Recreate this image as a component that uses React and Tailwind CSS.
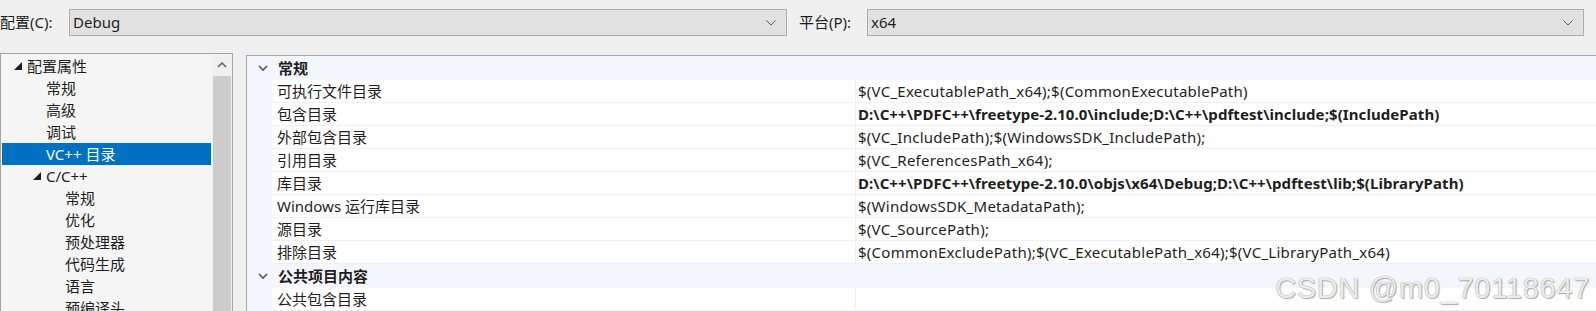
import React from "react";

const FONT = {
  fontFamily:
    '"Noto Sans", "Noto Sans CJK SC", sans-serif',
};

const treeItems = [
  { label: "配置属性", level: 0, expander: true },
  { label: "常规", level: 1 },
  { label: "高级", level: 1 },
  { label: "调试", level: 1 },
  { label: "VC++ 目录", level: 1, selected: true },
  { label: "C/C++", level: 1, expander: true },
  { label: "常规", level: 2 },
  { label: "优化", level: 2 },
  { label: "预处理器", level: 2 },
  { label: "代码生成", level: 2 },
  { label: "语言", level: 2 },
  { label: "预编译头", level: 2 },
];

const sections = [
  {
    title: "常规",
    rows: [
      ["可执行文件目录", "$(VC_ExecutablePath_x64);$(CommonExecutablePath)"],
      [
        "包含目录",
        "D:\\C++\\PDFC++\\freetype-2.10.0\\include;D:\\C++\\pdftest\\include;$(IncludePath)",
        true,
      ],
      ["外部包含目录", "$(VC_IncludePath);$(WindowsSDK_IncludePath);"],
      ["引用目录", "$(VC_ReferencesPath_x64);"],
      [
        "库目录",
        "D:\\C++\\PDFC++\\freetype-2.10.0\\objs\\x64\\Debug;D:\\C++\\pdftest\\lib;$(LibraryPath)",
        true,
      ],
      ["Windows 运行库目录", "$(WindowsSDK_MetadataPath);"],
      ["源目录", "$(VC_SourcePath);"],
      [
        "排除目录",
        "$(CommonExcludePath);$(VC_ExecutablePath_x64);$(VC_LibraryPath_x64)",
      ],
    ],
  },
  {
    title: "公共项目内容",
    rows: [["公共包含目录", ""]],
  },
];

function ComboChevron() {
  return (
    <svg width="10" height="6" viewBox="0 0 10 6" className="shrink-0">
      <path d="M0.5 0.5 L5 5 L9.5 0.5" fill="none" stroke="#555" strokeWidth="1" />
    </svg>
  );
}

function Combo({ value, width }) {
  return (
    <div
      className={`flex h-[27px] items-center justify-between border border-[#adadad] bg-[#e1e1e1] pl-[3px] pr-[10px] text-[15px] text-[#1e1e1e] ${width}`}
    >
      <span>{value}</span>
      <ComboChevron />
    </div>
  );
}

function Expander({ color = "#1e1e1e" }) {
  return (
    <svg width="8" height="8" viewBox="0 0 8 8" className="shrink-0">
      <path d="M0 8 L8 8 L8 0 Z" fill={color} />
    </svg>
  );
}

function SectionChevron() {
  return (
    <svg width="10" height="7" viewBox="0 0 10 7">
      <path d="M1 1 L5 5 L9 1" fill="none" stroke="#555" strokeWidth="1.6" />
    </svg>
  );
}

function TreeRow({ item }) {
  const indent = ["pl-[12px]", "pl-[44px]", "pl-[63px]"][item.level];
  const expIndent = item.level === 0 ? "pl-[12px]" : "pl-[31px]";
  return (
    <div
      className={`mx-[1px] flex h-[22px] items-center text-[15px] ${
        item.expander ? expIndent : indent
      } ${item.selected ? "bg-[#0071c1] text-white" : "text-[#1e1e1e]"}`}
    >
      {item.expander && (
        <span className="mr-[5px] flex w-[8px] items-center">
          <Expander />
        </span>
      )}
      <span className="whitespace-nowrap">{item.label}</span>
    </div>
  );
}

function PropertyRow({ name, value, bold }) {
  return (
    <div className="flex h-[23px]">
      <div className="w-[25px] shrink-0 bg-[#f3f6fa]" />
      <div className="flex flex-1 border-b border-[#eef0f3] bg-white">
        <div className="flex w-[584px] shrink-0 items-center border-r border-[#eef0f3] pl-[5px] text-[15px] text-[#1e1e1e]">
          {name}
        </div>
        <div
          className={`flex flex-1 items-center whitespace-nowrap pl-[2px] text-[15px] text-[#1e1e1e] ${
            bold ? "font-bold tracking-[0.08px]" : "tracking-[0.25px]"
          }`}
        >
          {value}
        </div>
      </div>
    </div>
  );
}

function SectionHeader({ title }) {
  return (
    <div className="flex h-[24px] items-center bg-[#f3f6fa]">
      <span className="flex w-[31px] justify-center">
        <SectionChevron />
      </span>
      <span className="text-[15px] font-bold text-[#1e1e1e]">{title}</span>
    </div>
  );
}

export default function App() {
  return (
    <div
      className="relative h-[311px] w-[1596px] overflow-hidden bg-[#f0f0f0]"
      style={FONT}
    >
      {/* config / platform bar */}
      <div className="flex items-center pt-[9px] text-[15px] text-[#1e1e1e]">
        <span className="w-[69px] whitespace-nowrap">配置(C):</span>
        <Combo value="Debug" width="w-[718px]" />
        <span className="ml-[12px] w-[68px] whitespace-nowrap">平台(P):</span>
        <Combo value="x64" width="w-[717px]" />
      </div>

      <div className="mt-[17px] flex">
        {/* tree */}
        <div className="flex h-[260px] w-[233px] shrink-0 border border-[#a5a5a5] bg-[#f5f5f5]">
          <div className="flex-1 pt-[1px]">
            {treeItems.map((item, i) => (
              <TreeRow key={i} item={item} />
            ))}
          </div>
          <div className="flex w-[20px] shrink-0 flex-col bg-[#f0f0f0]">
            <div className="flex h-[22px] items-center justify-center">
              <svg width="10" height="6" viewBox="0 0 10 6">
                <path d="M1 5 L5 1 L9 5" fill="none" stroke="#606060" strokeWidth="1.5" />
              </svg>
            </div>
            <div className="mx-[1px] flex-1 bg-[#cdcdcd]" />
          </div>
        </div>

        {/* property grid */}
        <div className="ml-[13px] mt-[2px] h-[260px] flex-1 border-l border-t border-[#a5a5a5] bg-white">
          {sections.map((s) => (
            <div key={s.title}>
              <SectionHeader title={s.title} />
              {s.rows.map(([name, value, bold], i) => (
                <PropertyRow key={i} name={name} value={value} bold={bold} />
              ))}
            </div>
          ))}
        </div>
      </div>

      <div
        className="absolute bottom-[8px] right-[6px] text-[29px] leading-none tracking-[0.7px] text-[#ececec] [text-shadow:0_0_1px_#888,1px_1px_1px_#b0b0b0]"
        style={{ fontFamily: '"Liberation Sans", sans-serif' }}
      >
        CSDN @m0_70118647
      </div>
    </div>
  );
}
